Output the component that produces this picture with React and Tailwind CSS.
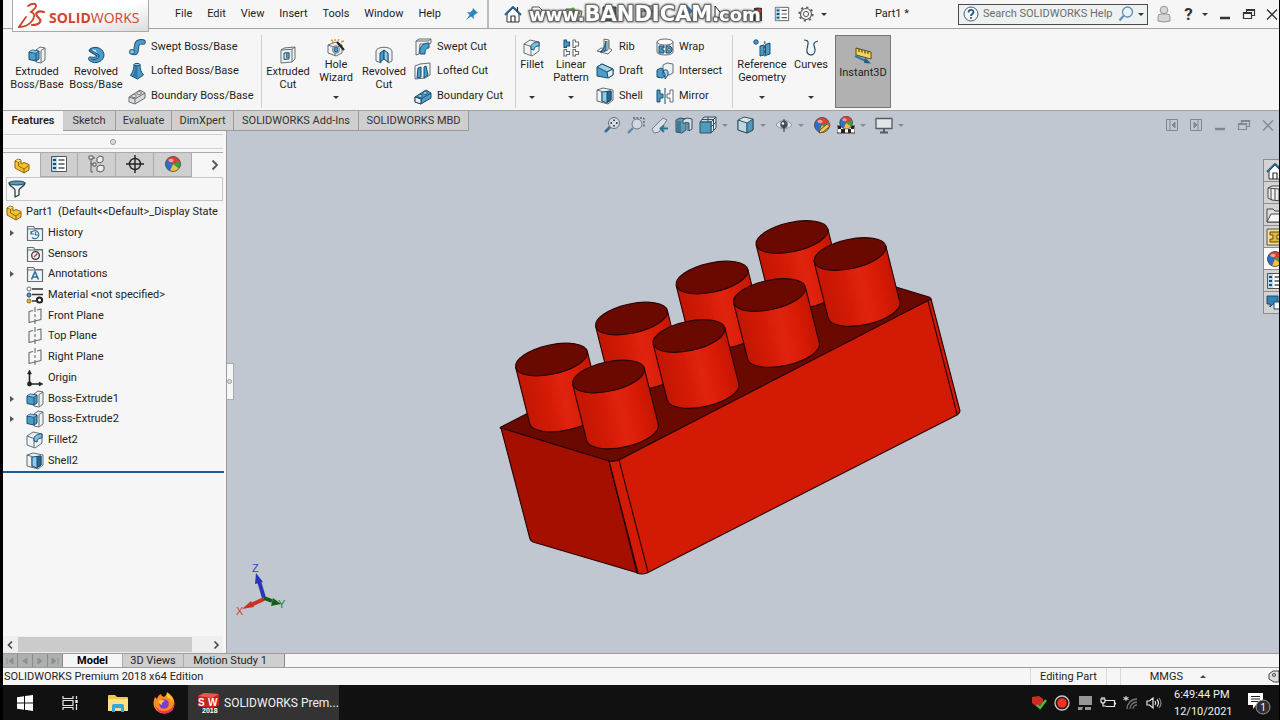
import React from 'react';

const B = '#4a9cc9';
const D = '#1d4d6e';
const G = '#666d73';
const L = '#eef3f6';

function Icon({ children, size = 'size-[18px]' }) {
  return (
    <svg viewBox="0 0 18 18" className={`${size} shrink-0`} fill="none" strokeLinejoin="round" aria-hidden="true">
      {children}
    </svg>
  );
}

const icons = {
  extrude: (
    <g strokeWidth="1">
      <path d="M8 4l4-3 5 1v12l-4 3-5-1z" fill={L} stroke={G} />
      <path d="M13 4.500v12M13 4.500l4-2.500" stroke={G} />
      <path d="M1 6l3-2 7 1v8l-3 2-7-1.500z" fill={B} stroke={D} />
      <path d="M1 6l7 1.200V15M8 7.200L11 5" stroke={D} />
      <path d="M1.500 5.800L4 4.300l6 1-2 1.500z" fill="#8dcbe8" />
    </g>
  ),
  revolve: (
    <g stroke={D}>
      <path d="M5 2c5-2 12 1 12 7s-8 10-14 6c-2-1-2-4 0-4s5 1 7-1L2 5c0-1 1-3 3-3z" fill={B} />
      <path d="M3 3.500l9 5.500M2 5l8 5M12 9c1 3-4 6-8 4" stroke={D} />
      <path d="M5 4l5 3-1-2.500L7 3.500z" fill="#d5eaf4" stroke="none" />
    </g>
  ),
  sweep: (
    <g>
      <path d="M4 14c5 2 4-2 4.500-5S9 3 15 4" stroke={D} strokeWidth="5.500" strokeLinecap="round" />
      <path d="M4 14c5 2 4-2 4.500-5S9 3 15 4" stroke={B} strokeWidth="3.800" strokeLinecap="round" />
      <ellipse cx="4" cy="13.800" rx="2.600" ry="2.300" fill="#80c3e4" stroke={D} strokeWidth=".8" />
    </g>
  ),
  loft: (
    <g stroke={D}>
      <path d="M6 2.500C6 8 4 11 2.500 13.500l7 3.500 6-4C13 10 12 7 12 2.500z" fill={B} />
      <path d="M9.500 4v12l-5-2.500C7 10 7 7 7 4z" fill="#2d79a8" stroke="none" />
      <ellipse cx="9" cy="2.600" rx="3" ry="1.200" fill="#9bd2ea" />
    </g>
  ),
  boundary: (
    <g stroke={G}>
      <path d="M1 10l11-7 5 3v5l-10 6-6-2z" fill="#dcdcdc" />
      <path d="M1 10l6 2 10-6M7 12v5" />
      <ellipse cx="6" cy="9" rx="2.300" ry="1.500" fill="#f4f4f4" />
      <ellipse cx="11" cy="6" rx="2.300" ry="1.500" fill="#f4f4f4" />
    </g>
  ),
  boundaryCut: (
    <g stroke={D}>
      <path d="M1 10l11-7 5 3v5l-10 6-6-2z" fill={B} />
      <path d="M1 10l6 2 10-6M7 12v5" />
      <path d="M1 10l6 2v5l-6-2z" fill="#e4eef3" />
      <ellipse cx="6" cy="9" rx="2.300" ry="1.400" fill="#bfe2f1" />
      <ellipse cx="11" cy="6" rx="2.300" ry="1.400" fill="#bfe2f1" />
    </g>
  ),
  cut: (
    <g stroke={G}>
      <path d="M2 4l3-2 11-1v12l-3 3-11 1z" fill={L} />
      <path d="M13 3.500V16M2 4l11-.7L16 1" />
      <path d="M5 7l5-.5v6.500l-5 .5z" fill="#bfe0ef" stroke={D} />
      <path d="M7.500 7v5l2.500-.5V6.800z" fill={B} />
    </g>
  ),
  wizard: (
    <g>
      <path d="M1 6l8-3 6 3v8l-6 3-8-3z" fill={L} stroke={G} />
      <path d="M1 6l7 2.500L15 6M8 8.500V17" stroke={G} />
      <ellipse cx="9" cy="10.500" rx="3.500" ry="3.800" fill="#fff" stroke={G} />
      <ellipse cx="9" cy="10.500" rx="2" ry="2.500" fill={B} stroke={D} />
      <path d="M10 3l7 8" stroke="#222" strokeWidth="2" />
      <path d="M4 1l2 1M8 0v2M12 0l-1 2M14 3l3-1M5 4l2-1" stroke="#d6973a" strokeWidth="1.400" />
    </g>
  ),
  revolveCut: (
    <g stroke={G}>
      <path d="M1 5c1-5 15-5 16 0v10l-4 2V8L9 5 6 8v9l-5-2z" fill={L} />
      <path d="M5 7l4-3v9l-4 3z" fill={B} stroke={D} />
      <path d="M9 4l4 3v9l-4-3z" fill="#8dcbe8" stroke={D} />
    </g>
  ),
  sweepCut: (
    <g stroke={G}>
      <path d="M2 3l3-2h12v4l-2 1H6l-1 10-3 1z" fill={L} />
      <path d="M6 16C5 9 8 5 15 5v5c-3 0-4 2-4 6z" fill={B} stroke={D} />
      <path d="M2 3h12l3-2" />
    </g>
  ),
  loftCut: (
    <g stroke={G}>
      <path d="M1 4l5-2 10-1v12l-5 3-10 1z" fill={L} />
      <path d="M4 6l3-1v10l-4 1zM10 5l2-1 2 9-4 3z" fill={B} stroke={D} />
    </g>
  ),
  fillet: (
    <g stroke={G}>
      <path d="M1 5l6-4 9 2v9l-7 5-8-3z" fill={L} />
      <path d="M1 5l7 2.500V17" />
      <path d="M8 7.500C8 5 12 2.500 16 3v4c-3 0-5 1-5 4l-3-1z" fill="#7cbfe0" stroke={D} />
    </g>
  ),
  pattern: (
    <g strokeWidth="1.100">
      <path d="M2 1h2.500v2h3v4h-3v1.500H2z" fill={B} stroke={D} />
      <path d="M11 1h2.500v2h3v4h-3v1.500H11zM2 10.500h2.500v2h3v3h-3V17H2zM11 10.500h2.500v2h3v3h-3V17H11z" fill="#fff" stroke={G} />
    </g>
  ),
  rib: (
    <g stroke={G}>
      <path d="M8 1l5 1v8l3 2-4 4-11-3 4-3 3 .5z" fill={L} />
      <path d="M10 3v9l-6 2c4-3 5-6 6-11z" fill={B} stroke={D} />
      <path d="M12 3v9l-7 3" />
    </g>
  ),
  draft: (
    <g stroke={D}>
      <path d="M1 5l5-3 11 5v6l-5 3-11-2z" fill={B} />
      <path d="M1 5l5-3 11 5-6 3z" fill="#9bd2ea" />
      <path d="M11 10l6-3v6l-5 3z" fill="#e4eef3" />
    </g>
  ),
  shell: (
    <g stroke={G}>
      <path d="M1 3l6-2 10 2v10l-5 4-11-3z" fill={L} />
      <path d="M1 3l5 1.500v11" />
      <path d="M6 5l9-1v9l-4 3-5-2z" fill="#8dcbe8" stroke={D} />
      <path d="M11 4.500l4-.5v9l-4 2.500z" fill="#28678f" stroke={D} />
    </g>
  ),
  wrap: (
    <g stroke={G}>
      <path d="M1 4v10c0 4 16 4 16 0V4z" fill={L} />
      <ellipse cx="9" cy="4" rx="8" ry="3" fill="#fff" />
      <path d="M3 8h5v2H6v2h2v3H3zM10 8h4l2 2v3l-2 2h-4z" fill={B} stroke={D} />
      <path d="M12 10.500h2v2h-2z" fill="#fff" />
    </g>
  ),
  intersect: (
    <g stroke={G}>
      <path d="M7 3l4-2 6 1v9l-4 2-6-2z" fill={L} />
      <path d="M1 8l4-2 2 1v6l2 1-3 2-5-1z" fill={B} stroke={D} />
      <path d="M7 9c3-2 5-1 5 1v3l-3 4V12z" fill="#9bd2ea" stroke={D} />
    </g>
  ),
  mirror: (
    <g>
      <path d="M1 3h3v4h3v4H4v4H1z" fill={B} stroke={D} />
      <path d="M17 3h-3v4h-3v4h3v4h3z" fill="#fff" stroke={G} />
      <path d="M9 1v16" stroke={D} />
    </g>
  ),
  geometry: (
    <g>
      <circle cx="3" cy="3" r="2.200" fill={B} stroke={D} />
      <path d="M7 7l4-1v10l-4 1zM12.500 5.500l4.500-1.500v11l-4.500 1.500z" fill={B} stroke={D} />
      <path d="M11.800 2v15.500" stroke={D} strokeDasharray="3 1.500" />
    </g>
  ),
  curves: <path d="M2 1c6 0 4 4 3 9-1 7 7 8 8 2 1-4-5-8 3-10" stroke={D} strokeWidth="1.200" />,
  instant: (
    <g>
      <path d="M2 1l15 4v7L2 8z" fill="#f5d45c" stroke="#5b4a12" />
      <path d="M5 2v3M8 3v2.500M11 4v2.500M14 4.500V7" stroke="#2f2708" />
      <path d="M1 9l11 5" stroke="#2d79a8" strokeWidth="2" />
      <path d="M11 10.500l6 6-7-.5z" fill="#1f5d85" />
    </g>
  ),
  home: (
    <g>
      <path d="M3 9v8h12V9L9 3z" fill="#fff" stroke="#333" />
      <path d="M1 10l8-8 8 8" stroke="#2a6184" strokeWidth="2" />
      <path d="M7 17v-6h4v6M13.500 2v4" stroke="#333" strokeWidth="1.200" />
    </g>
  ),
  list: (
    <g>
      <path d="M1.500 1.500h15v15h-15z" fill="#fff" stroke="#555" />
      <path d="M2 2h5v14H2z" fill="#b9dcec" />
      <path d="M3 5h3M3 9h3M3 13h3" stroke={D} strokeWidth="2" />
      <path d="M8.500 5h6M8.500 9h6M8.500 13h6" stroke="#555" strokeWidth="1.300" />
    </g>
  ),
  part: (
    <g stroke="#8a6410">
      <path d="M2 5l3-2 3 1v4l3-1.500 5 2V14l-5 3-9-5z" fill="#f4c22f" />
      <path d="M8 4L5.500 6v4L11 13l5-3.500M11 13v4M2 5l3.500 1" />
      <path d="M5 3.500L8 4.300 5.500 6 3 5z" fill="#ffe58a" stroke="none" />
    </g>
  ),
  config: (
    <g stroke="#555">
      <path d="M3 1v16H5M3 3h4M3 9h4" />
      <path d="M1 1h4v3H1zM9 3l3-2 3 1v4l-3 2-3-1zM9 12l3-2 4 1v4l-3 2-4-1zM5 8h3v3H5z" fill="#eee" />
    </g>
  ),
  target: (
    <g stroke="#222" strokeWidth="1.400">
      <circle cx="9" cy="9" r="5.500" />
      <path d="M9 0v18M0 9h18" />
    </g>
  ),
  ball: (
    <g>
      <circle cx="9" cy="9" r="7.500" fill="#2f6fc6" />
      <path d="M9 9L3 4.500A7.500 7.500 0 0 1 16 6z" fill="#e2402f" />
      <path d="M9 9L3 4.500A7.500 7.500 0 0 0 6 16z" fill="#2f6fc6" />
      <path d="M9 9l-3 7a7.500 7.500 0 0 0 9-2.500z" fill="#f0c236" />
      <path d="M9 9l6 4.500A7.500 7.500 0 0 0 16 6z" fill="#3fa043" />
      <circle cx="9" cy="9" r="7.500" stroke="#4b4b4b" strokeWidth=".8" />
      <ellipse cx="7" cy="5.500" rx="2.500" ry="1.800" fill="#fff" opacity=".5" />
    </g>
  ),
  funnel: (
    <g stroke="#2b3f4b">
      <path d="M1 3c0 3 6 5 6 7v7l4-2v-5c0-2 6-4 6-7z" fill="#eef5f8" strokeWidth="1.300" />
      <ellipse cx="9" cy="3" rx="8" ry="2" fill={B} />
    </g>
  ),
  folder: (
    <g stroke={G}>
      <path d="M1.500 16.500V2.500h6l1.500 2h7.500v12z" fill="#f2f4f5" strokeWidth="1.200" />
      <path d="M1.500 5h15" />
    </g>
  ),
  material: (
    <g>
      <circle cx="3" cy="3" r="2" fill="#fff" stroke={G} />
      <circle cx="3" cy="9" r="2" fill={B} stroke={D} />
      <circle cx="3" cy="15" r="2" fill="#f4c22f" stroke="#8a6410" />
      <path d="M6 3h11M6 8.500h11M6 15h4" stroke="#333" strokeWidth="1.400" />
      <circle cx="13.500" cy="14" r="2.600" stroke="#222" strokeWidth="2" fill="#fff" />
    </g>
  ),
  plane: (
    <g stroke={G} strokeWidth="1.100">
      <path d="M7 3.500L3 4.500v11l12-3v-10.500l-4 1" />
      <path d="M9 0v5M9 7v3M9 12v5" />
    </g>
  ),
  origin: (
    <g stroke="#222" strokeWidth="1.600">
      <path d="M3.500 3v12H15" />
      <path d="M1.500 5l2-4 2 4zM13 13l4 2-4 2z" fill="#222" strokeWidth=".5" />
      <circle cx="3.500" cy="15" r="1.600" fill="#222" />
    </g>
  ),
  zoomFit: (
    <g stroke="#66717a">
      <circle cx="11" cy="7" r="5.500" fill="#d4dbe3" />
      <path d="M7 11l-5 5" stroke="#3b6c8e" strokeWidth="2.600" />
      <path d="M11 3.500v1.500M11 9v1.500M7.500 7H9M13 7h1.500" stroke="#3c444b" strokeWidth="1.800" />
    </g>
  ),
  zoomArea: (
    <g stroke="#6d7882">
      <path d="M6 2h11v10" strokeDasharray="2 1.500" stroke="#333" />
      <circle cx="10" cy="8" r="5" fill="#cdd9e4" />
      <path d="M6 12l-5 5" stroke="#5c88a6" strokeWidth="2.400" />
    </g>
  ),
  prevView: (
    <g stroke="#747e87">
      <path d="M1 13L12 2l4 2-8 12-5 1z" fill="#d9dfe4" />
      <path d="M17 12.500H10M13 9.500l-3.500 3 3.500 3.500" stroke="#2b7299" strokeWidth="2" />
    </g>
  ),
  section: (
    <g stroke="#34505f">
      <path d="M1 4l4-2 6 1v11l-4 3-6-1z" fill="#5b9dbd" />
      <path d="M8 4l4-2 5 1v10l-3 2V7l-3-.5-3 1z" fill="#d4dde2" />
      <path d="M3 5v11M5 5v11M13 7v8" />
    </g>
  ),
  viewCube: (
    <g stroke="#34505f">
      <path d="M12 6l5-5v11l-5 5z" fill="#dfe7eb" />
      <path d="M1 6l4-5h12l-5 5z" fill="#cfdde4" />
      <path d="M1 6h11v11H1z" fill="#4d9bbd" />
      <path d="M9 1v5M3 3.500h12M12 11l5-5M14.500 3.500v11" />
    </g>
  ),
  cube: (
    <g stroke="#34505f">
      <path d="M1 4l6-3 9 2v11l-6 3-9-3z" fill="#dbe5ea" />
      <path d="M1 4l9 3v10l-9-3z" fill="#bcd6e2" />
      <path d="M10 7l6-4v11l-6 3z" fill="#4d9bbd" />
    </g>
  ),
  eye: (
    <g>
      <path d="M1 9c4-6 12-6 16 0-4 5-12 5-16 0z" fill="#dfe3e7" stroke="#8a929a" />
      <circle cx="9" cy="8.500" r="3.800" fill="#4f565d" />
      <path d="M9 3v13" stroke="#333" />
      <circle cx="8" cy="7.500" r="1.200" fill="#fff" />
    </g>
  ),
  monitor: (
    <g stroke="#555b60">
      <path d="M1 2.500h16v10H1z" fill="#e2e6e6" strokeWidth="1.300" />
      <path d="M9 12.500V16M5 16.500h8" strokeWidth="2" />
    </g>
  ),
  books: (
    <g stroke="#444">
      <path d="M2 4l4-2 11 0v12l-3 3-8-1-4-2z" fill="#eee" />
      <path d="M5 5v11M9 5v11M13 5v12M2 4l11 1 4-3" />
    </g>
  ),
  open: (
    <g stroke="#444">
      <path d="M1 16V3h6l2 2h8v11z" fill="#ddd" />
      <path d="M1 16l4-8h13v8z" fill="#f7f7f7" />
    </g>
  ),
  palette: (
    <g>
      <path d="M1 1h16v16H1z" fill="#f2dd90" stroke="#555" />
      <path d="M4 4h10v3h-3v4h3v3H4v-3h3V7H4z" fill="#e5b63a" stroke="#5f4a12" />
    </g>
  ),
  chat: (
    <g>
      <path d="M1 2h11v8H7l-3 3v-3H1z" fill="#3583b0" stroke={D} />
      <path d="M8 8h10v7h-3v2l-2-2H8z" fill="#f2f7fa" stroke={D} />
    </g>
  ),
};

icons.paint = (
  <g>
    {icons.ball}
    <path d="M7 14l7-6 3 2-7 6-4 1z" fill="#f3c964" stroke="#6b4a1c" />
    <path d="M14 8l1-1 3 2-1 1z" fill="#c95b45" />
  </g>
);
icons.scene = (
  <g>
    <path d="M0 10h18v7H0z" fill="#fff" stroke="#333" />
    <path d="M1 10h3v3H1zM14 10h3v3h-3zM4 13h4v4H4zM11 13h3v4h-3z" fill="#222" />
    <g transform="translate(1.500 -1) scale(.85)">{icons.ball}</g>
  </g>
);

function Caret({ color = 'border-t-[#333]' }) {
  return <span className={`block h-0 w-0 border-x-[3px] border-t-[3px] border-x-transparent ${color}`} />;
}

function BigTool({ icon, lines, width, arrow }) {
  return (
    <button className={`flex h-full shrink-0 flex-col items-center ${width} ${arrow ? 'pt-1' : 'pt-[11px]'}`}>
      <Icon>{icons[icon]}</Icon>
      <span className="mt-[1px] block h-6 text-center leading-[13px] whitespace-nowrap">
        {lines.map((l) => (
          <span key={l} className="block">{l}</span>
        ))}
      </span>
      {arrow && <span className="mt-[14px]"><Caret /></span>}
    </button>
  );
}

function ToolColumn({ items, width }) {
  return (
    <div className={`grid h-full shrink-0 grid-rows-3 ${width}`}>
      {items.map(([icon, label]) => (
        <button key={label} className="flex items-center gap-[5px] whitespace-nowrap">
          <Icon>{icons[icon]}</Icon>
          {label}
        </button>
      ))}
    </div>
  );
}

const Divider = () => <div className="h-full w-px shrink-0 bg-[#cfcfcf]" />;

function Logo() {
  return (
    <div className="ml-[9px] flex h-8 w-[137px] shrink-0 items-center self-start border border-t-0 border-[#a9a9a9] bg-linear-to-br from-white via-white to-[#dcdcdc] pl-[5px] text-[#d0442f]">
      <svg viewBox="0 0 28 27" className="h-[27px] w-7 shrink-0" fill="none" stroke="currentColor" strokeLinecap="round" aria-hidden="true">
        <path d="M10 4c4-3 8-3 8 0 0 2-3 4-5 6 4 1 4 5 1 9-3 4-7 6-13 6l7-10" strokeWidth="1.800" />
        <path d="M26 10c-6-2-9 1-7 4 1 2 5 3 3 6-1 2-4 3-8 3" strokeWidth="2.200" />
      </svg>
      <span className="mt-1 ml-[3px] font-['Open_Sans','Noto_Sans',sans-serif] text-[14px] leading-4"><b>SOLID</b>WORKS</span>
    </div>
  );
}

function WindowGlyph({ kind }) {
  return (
    <svg viewBox="0 0 14 14" className="size-[14px] shrink-0" fill="none" stroke="currentColor" aria-hidden="true">
      {kind === 'min' && <path d="M2 11h10" strokeWidth="2.500" />}
      {kind === 'restore' && <path d="M4.500 5V2.500h8v6H10M1.500 5.500h8v6h-8zM4.500 3.500h8M1.500 6.500h8" strokeWidth="1.200" />}
      {kind === 'close' && <path d="M2 2.500l10 10M12 2.500l-10 10" strokeWidth="1.300" />}
      {kind === 'left' && <path d="M1.500 1.500h11v11h-11zM5 1.500v11" />}
      {kind === 'left' && <path d="M7 7l3-3v6z" fill="currentColor" />}
      {kind === 'right' && <path d="M1.500 1.500h11v11h-11zM9 1.500v11" />}
      {kind === 'right' && <path d="M8 7l-3-3v6z" fill="currentColor" />}
    </svg>
  );
}

function Watermark() {
  return (
    <div className="relative ml-[7px] flex h-7 w-[236px] shrink-0 items-center">
      <svg viewBox="0 0 236 28" className="absolute inset-0 h-7 w-[236px]" fill="none" aria-hidden="true">
        <path d="M3 7h7l3 3v11H3z" fill="#fff" stroke="#555" />
        <path d="M37 9h6l2 2h8l-2 10H37z" fill="#c7d9a8" stroke="#555" />
        <path d="M41 11l3-4 5 5 3 1-6 3z" fill="#4ea52f" />
        <path d="M74 7h13v14H74z" fill="#3a6f8c" stroke="#333" />
        <path d="M112 11h15v8h-15zM115 6h9v5h-9z" fill="#b8c6cc" stroke="#444" />
        <path d="M150 17q-1-8 8-8V5l6 6-6 6v-4q-4 0-4 5z" fill="#2f7fae" />
        <path d="M186 6v15l4-4 5 0z" fill="#fff" stroke="#222" />
        <path d="M225 8q4-1 8 0v13h-8z" fill="#333" />
        <circle cx="230" cy="11" r="2.500" fill="#c83a30" />
      </svg>
      <div className="relative flex items-baseline font-['DejaVu_Sans',sans-serif] font-bold text-white [paint-order:stroke_fill] [-webkit-text-stroke:2px_#6a6a6a] drop-shadow-[0_0_1px_#333]">
        <span className="text-[18px] leading-6">www.</span>
        <span className="text-[21px] leading-6">BANDICAM</span>
        <span className="text-[18px] leading-6">.com</span>
      </div>
    </div>
  );
}

function TitleBar() {
  return (
    <header className="flex h-[29px] items-center border-b border-[#a3a3a3]">
      <Logo />
      <nav className="ml-[26px] flex w-[266px] shrink-0 justify-between">
        {['File', 'Edit', 'View', 'Insert', 'Tools', 'Window', 'Help'].map((m) => (
          <button key={m}>{m}</button>
        ))}
      </nav>
      <button aria-label="Pin menu" className="ml-6">
        <svg viewBox="0 0 14 14" className="size-[14px]" aria-hidden="true">
          <path d="M8 1l5 5-2 .500-2.500 2.500.500 3-3-2.500L1 13l3.500-5L2 5l3 .500L7.500 3z" fill="#2f86b8" />
        </svg>
      </button>
      <div className="ml-2 h-full w-[2px] bg-[#bdbdbd]" />
      <button aria-label="Home" className="ml-[15px]"><Icon>{icons.home}</Icon></button>
      <Watermark />
      <button aria-label="File properties" className="ml-[9px]"><Icon size="size-4">{icons.list}</Icon></button>
      <button aria-label="Options" className="ml-2">
        <svg viewBox="0 0 16 16" className="size-4" fill="none" stroke="#5a5a5a" aria-hidden="true">
          <circle cx="8" cy="8" r="5.500" strokeWidth="1.200" />
          <circle cx="8" cy="8" r="2.600" />
          <circle cx="8" cy="8" r="6.800" strokeWidth="1.600" strokeDasharray="2.200 3.140" />
        </svg>
      </button>
      <span className="ml-[7px]"><Caret /></span>
      <span className="ml-auto pr-[49px] whitespace-nowrap">Part1 *</span>
      <label className="flex h-[21px] w-[190px] shrink-0 items-center border border-[#4a4a4a] bg-[#eef1f2] pr-[3px] pl-1">
        <svg viewBox="0 0 16 16" className="size-4 shrink-0" aria-hidden="true">
          <circle cx="8" cy="8" r="7" fill="#f4f8fa" stroke="#47606f" />
          <path d="M5.500 6.500C5.500 3 10.500 3.200 10.500 6c0 2-2.500 2-2.500 4M8 11v1.800" fill="none" stroke="#1f5d85" strokeWidth="1.800" />
        </svg>
        <input aria-label="Search SOLIDWORKS Help" placeholder="Search SOLIDWORKS Help" className="ml-1 w-0 min-w-0 flex-1 bg-transparent outline-none placeholder:text-[#6c6c6c]" />
        <svg viewBox="0 0 16 16" className="mr-1 size-4 shrink-0" fill="none" aria-hidden="true">
          <circle cx="9.500" cy="6" r="5" fill="#eaf3fb" stroke="#5f8fb8" strokeWidth="1.300" />
          <path d="M5.500 10L1.500 14.500" stroke="#5f8fb8" strokeWidth="2.200" />
        </svg>
        <Caret />
      </label>
      <div className="ml-2 flex shrink-0 items-center text-[#333]">
        <button aria-label="Account">
          <svg viewBox="0 0 16 18" className="h-[18px] w-4" fill="#d6d6d6" stroke="#949494" aria-hidden="true">
            <path d="M2 16V12q0-3 3-3h6q3 0 3 3v4q-6 2-12 0z" />
            <circle cx="8" cy="5" r="3.800" />
          </svg>
        </button>
        <button aria-label="Help" className="ml-3 w-[9px] text-[17px] leading-4 font-bold">?</button>
        <span className="ml-[9px]"><Caret /></span>
        <button aria-label="Minimize" className="ml-[10px]"><WindowGlyph kind="min" /></button>
        <button aria-label="Restore" className="ml-[10px]"><WindowGlyph kind="restore" /></button>
        <button aria-label="Close" className="ml-[9px] w-[14px] overflow-hidden"><WindowGlyph kind="close" /></button>
      </div>
    </header>
  );
}

function Ribbon() {
  return (
    <div className="flex h-[82px] border-b border-[#a3a3a3] pt-[6px] pb-[2px] pl-[5px]">
      <BigTool icon="extrude" lines={['Extruded', 'Boss/Base']} width="w-[58px]" />
      <BigTool icon="revolve" lines={['Revolved', 'Boss/Base']} width="w-[60px]" />
      <ToolColumn width="w-[133px] pl-[2px]" items={[['sweep', 'Swept Boss/Base'], ['loft', 'Lofted Boss/Base'], ['boundary', 'Boundary Boss/Base']]} />
      <div className="w-[2px]" />
      <Divider />
      <div className="w-[2px]" />
      <BigTool icon="cut" lines={['Extruded', 'Cut']} width="w-12" />
      <BigTool icon="wizard" lines={['Hole', 'Wizard']} width="w-12" arrow />
      <BigTool icon="revolveCut" lines={['Revolved', 'Cut']} width="w-12" />
      <ToolColumn width="w-[107px] pl-[6px]" items={[['sweepCut', 'Swept Cut'], ['loftCut', 'Lofted Cut'], ['boundaryCut', 'Boundary Cut']]} />
      <Divider />
      <BigTool icon="fillet" lines={['Fillet']} width="w-8" arrow />
      <BigTool icon="pattern" lines={['Linear', 'Pattern']} width="w-[46px]" arrow />
      <ToolColumn width="w-[60px] pl-[2px]" items={[['rib', 'Rib'], ['draft', 'Draft'], ['shell', 'Shell']]} />
      <ToolColumn width="w-[78px] pl-[2px]" items={[['wrap', 'Wrap'], ['intersect', 'Intersect'], ['mirror', 'Mirror']]} />
      <Divider />
      <BigTool icon="geometry" lines={['Reference', 'Geometry']} width="w-[58px]" arrow />
      <BigTool icon="curves" lines={['Curves']} width="w-10" arrow />
      <div className="w-1" />
      <BigTool icon="instant" lines={['Instant3D']} width="w-14 border border-[#777] bg-[#b1b1b1]" />
    </div>
  );
}

const hud = [
  ['zoomFit', 'Zoom to fit'], ['zoomArea', 'Zoom to area'], ['prevView', 'Previous view'], ['section', 'Section view'],
  ['viewCube', 'View orientation', true], ['cube', 'Display style', true], ['eye', 'Hide items', true],
  ['paint', 'Edit appearance'], ['scene', 'Apply scene', true], ['monitor', 'View settings', true],
];

function CommandTabs() {
  const tabs = [
    ['Features', 'w-[60px]'], ['Sketch', 'w-[53px]'], ['Evaluate', 'w-14'],
    ['DimXpert', 'w-[62px]'], ['SOLIDWORKS Add-Ins', 'w-[125px]'], ['SOLIDWORKS MBD', 'w-[110px]'],
  ];
  return (
    <div className="flex h-5 items-start">
      {tabs.map(([t, w], i) => (
        <button
          key={t}
          className={`h-5 shrink-0 text-center whitespace-nowrap ${w} ${i === 0 ? 'bg-[#f6f6f6] font-semibold' : 'border-r border-b border-[#9a9a9a] bg-[#cfcfcf] text-[#333]'}`}
        >
          {t}
        </button>
      ))}
      <div className="ml-[134px] flex h-7 shrink-0 items-center gap-[6px]">
        {hud.map(([icon, label, arrow]) => (
          <button key={label} aria-label={label} className={`flex items-center gap-[5px] ${arrow ? 'pr-[3px]' : ''}`}>
            <Icon>{icons[icon]}</Icon>
            {arrow && <Caret color="border-t-[#848c96]" />}
          </button>
        ))}
      </div>
      <div className="ml-auto flex h-7 shrink-0 items-center gap-[10px] pr-[4px] text-[#80878f]">
        {['left', 'right', 'min', 'restore', 'close'].map((k) => (
          <button key={k} aria-label={`Document ${k}`}><WindowGlyph kind={k} /></button>
        ))}
      </div>
    </div>
  );
}

function FolderGlyph({ mark }) {
  return (
    <Icon>
      {icons.folder}
      {mark === 'clock' && <path d="M5 9.500a4 4 0 1 1 1 4M5 7v3h3M9.500 8v3h2.500" stroke="#2b7299" strokeWidth="1.200" />}
      {mark === 'gauge' && <g><circle cx="9.500" cy="10.500" r="3.800" stroke="#333" strokeWidth="1.300" /><path d="M8 12l3.500-3.500" stroke="#d33" strokeWidth="1.500" /></g>}
      {mark === 'letter' && <path d="M5.500 14.500l3.500-8 3.500 8M7 12h4" stroke="#2b7299" strokeWidth="1.600" />}
    </Icon>
  );
}

const tree = [
  ['clock', 'History', true], ['gauge', 'Sensors'], ['letter', 'Annotations', true], ['material', 'Material <not specified>'],
  ['plane', 'Front Plane'], ['plane', 'Top Plane'], ['plane', 'Right Plane'], ['origin', 'Origin'],
  ['extrude', 'Boss-Extrude1', true], ['extrude', 'Boss-Extrude2', true], ['fillet', 'Fillet2'], ['shell', 'Shell2'],
];

function FeatureManager() {
  return (
    <aside className="flex w-[224px] shrink-0 flex-col border-r border-[#9c9c9c] bg-[#f6f6f6] pt-[3px]">
      <div className="mr-[3px] flex h-[15px] items-center justify-center border-y border-[#d2d2d2]">
        <span className="size-[6px] rounded-full border border-[#999] bg-[#ddd]" />
      </div>
      <div className="mt-[3px] mr-[3px] flex h-6 items-center border-t border-[#aaa]">
        {['part', 'list', 'config', 'target', 'ball'].map((k, i) => (
          <button
            key={k}
            aria-label={`Panel ${k}`}
            className={`flex h-6 items-center justify-center ${i === 0 ? 'w-[37px] bg-[#f6f6f6]' : 'w-[38px] border-r border-b border-l border-[#aaa] bg-[#cfcfcf]'} ${i > 1 ? 'border-l-0' : ''}`}
          >
            <Icon>{icons[k]}</Icon>
          </button>
        ))}
        <button aria-label="More panels" className="mr-1 ml-auto">
          <svg viewBox="0 0 8 12" className="h-3 w-2" fill="none" stroke="#555" strokeWidth="1.800" aria-hidden="true"><path d="M1.500 1.500L6 6l-4.500 4.500" /></svg>
        </button>
      </div>
      <label className="mt-[1px] mr-[3px] ml-[3px] flex h-6 items-center border border-[#c6c6c6] pl-[1px]">
        <Icon>{icons.funnel}</Icon>
        <input aria-label="Filter tree" className="w-0 flex-1 bg-transparent outline-none" />
      </label>
      <ul className="mt-px mr-[2px] grid h-[269px] auto-rows-fr overflow-hidden text-[#222]">
        <li className="flex items-center gap-[3px] pl-[2px] whitespace-nowrap">
          <Icon>{icons.part}</Icon>
          <span className="whitespace-pre">{'Part1  (Default<<Default>_Display State'}</span>
        </li>
        {tree.map(([icon, label, open]) => (
          <li key={label} className="flex items-center whitespace-nowrap">
            <span className="flex w-[23px] pl-[7px]">
              {open && <span className="h-0 w-0 border-y-[3px] border-l-[4px] border-y-transparent border-l-[#555]" />}
            </span>
            {icons[icon] ? <Icon>{icons[icon]}</Icon> : <FolderGlyph mark={icon} />}
            <span className="ml-1">{label}</span>
          </li>
        ))}
      </ul>
      <div className="mr-[2px] h-[2px] bg-[#1d5c96]" />
      <div className="mt-auto mr-[3px] flex h-[17px] items-center bg-[#efefef] px-[3px]">
        <svg viewBox="0 0 8 10" className="h-[10px] w-2" fill="none" stroke="#444" strokeWidth="1.600" aria-hidden="true"><path d="M6 1.500L2.500 5 6 8.500" /></svg>
        <div className="mr-5 ml-1 h-[15px] flex-1 bg-[#cbcbcb]" />
        <svg viewBox="0 0 8 10" className="h-[10px] w-2" fill="none" stroke="#444" strokeWidth="1.600" aria-hidden="true"><path d="M2.500 1.500L6 5 2.500 8.500" /></svg>
      </div>
    </aside>
  );
}

const studs = [
  [792, 237], [712, 277.5], [631.5, 318.5], [551.5, 359.5],
  [850, 254], [769.500, 295], [689, 336], [608.500, 376.500],
];

function Brick() {
  return (
    <svg viewBox="227 131 1052 522" preserveAspectRatio="xMidYMid slice" className="absolute inset-0 h-full w-full" strokeLinejoin="round" role="img" aria-label="Brick model">
      <defs>
        <linearGradient id="stud" x1="0" x2="1" y1="0.2" y2="0">
          <stop offset="0" stopColor="#c21603" />
          <stop offset="0.300" stopColor="#d51b05" />
          <stop offset="0.480" stopColor="#e02410" />
          <stop offset="0.700" stopColor="#d61a04" />
          <stop offset="1" stopColor="#b01202" />
        </linearGradient>
      </defs>
      <g stroke="#250300" strokeWidth="1.100">
        <path d="M501 427L812 267Q817 263 823 265L929 297Q933 299 929 301L619 460Q614 462 609 461L502 429Q499 428 501 427z" fill="#6a0900" />
        <path d="M501 428L609 461L638 573L533 542Q531 541 530 539z" fill="#a50f00" />
        <path d="M609 461Q614 462 619 460L931 299L960 411Q960 413 957 415L647 573Q642 575 637 573z" fill="#d31a04" />
        <path d="M609 461L638 573M619 460L648 572M928 301L957 414" fill="none" />
      </g>
      {studs.map(([x, y]) => (
        <g key={`${x}-${y}`} transform={`translate(${x} ${y})`} stroke="#250300" strokeWidth="1.100">
          <path d="M-35.800 8.200l14 56A36.700 14.600 -12.500 0 0 49.800 47.800l-14-56z" fill="url(#stud)" />
          <ellipse rx="36.700" ry="14.600" transform="rotate(-12.500)" fill="#6a0900" />
        </g>
      ))}
    </svg>
  );
}

function Triad() {
  return (
    <svg viewBox="0 0 52 56" className="absolute bottom-[36px] left-[8px] h-14 w-[52px]" aria-label="Orientation triad" role="img">
      <path d="M29 37L24 20" stroke="#2a35b5" strokeWidth="4" />
      <path d="M21 12l7 9-8 2z" fill="#2a35b5" />
      <path d="M29 38l-13 6" stroke="#c93325" strokeWidth="4" />
      <path d="M7 48l9-8 3 6z" fill="#c93325" />
      <path d="M29 37l8 3" stroke="#155c1b" strokeWidth="4" />
      <path d="M46 43l-10 2 2-8z" fill="#155c1b" />
      <g fontFamily="Liberation Sans, sans-serif" fontSize="11">
        <text x="17" y="11" fill="#3640cc">Z</text>
        <text x="1" y="54" fill="#d53c30">X</text>
        <text x="43" y="47" fill="#228a2c">Y</text>
      </g>
    </svg>
  );
}

function Viewport() {
  return (
    <main className="relative min-w-0 flex-1">
      <Brick />
      <button aria-label="Collapse panel" className="absolute top-[232px] left-0 flex h-[37px] w-[7px] items-center border-y border-r border-[#aaa] bg-[#f6f6f6]">
        <span className="size-[5px] rounded-full border border-[#999] bg-[#ddd]" />
      </button>
      <Triad />
      <div className="absolute top-7 right-0 w-4 overflow-hidden border-t border-l border-[#8c8c8c]">
        {['home', 'books', 'open', 'palette', 'ball', 'list', 'chat'].map((k) => (
          <button key={k} aria-label={`Task pane ${k}`} className={`flex h-[22px] w-4 items-center overflow-hidden border-b border-[#8c8c8c] pl-[2px] ${k === 'ball' ? 'bg-white' : 'bg-[#d3d3d3]'}`}>
            <Icon>{icons[k]}</Icon>
          </button>
        ))}
      </div>
    </main>
  );
}

function BottomTabs() {
  return (
    <div className="flex h-[15px] items-stretch border-y border-[#9c9c9c] bg-[#f6f6f6]">
      {['M3 2v6M9 2L5 5l4 3z', 'M8 2L4 5l4 3z', 'M4 2l4 3-4 3z', 'M9 2v6M3 2l4 3-4 3z'].map((d) => (
        <button key={d} aria-label="Scroll tabs" className="flex w-[15px] items-center justify-center border-r border-[#8b8b8b] bg-[#adb0b0]">
          <svg viewBox="0 0 12 10" className="h-[10px] w-3" fill="#8b8f8f" stroke="#8b8f8f" aria-hidden="true"><path d={d} /></svg>
        </button>
      ))}
      <button className="w-[60px] border-r border-[#aaa] leading-3 font-bold text-black">Model</button>
      <button className="w-[61px] border-r border-[#aaa] bg-[#cfcfcf] leading-3 whitespace-nowrap">3D Views</button>
      <button className="w-[101px] border-r border-[#8b8b8b] bg-[#cfcfcf] pr-2 leading-3 whitespace-nowrap">Motion Study 1</button>
    </div>
  );
}

function StatusBar() {
  return (
    <footer className="flex h-[17px] items-center pl-[1px] whitespace-nowrap">
      <span>SOLIDWORKS Premium 2018 x64 Edition</span>
      <div className="ml-auto flex h-full items-center">
        <span className="flex h-full items-center border-x border-[#d8d8d8] px-[9px]">Editing Part</span>
        <span className="ml-[13px] flex h-full items-center border-l border-[#d8d8d8] pl-[29px]">MMGS</span>
        <span className="ml-[17px] h-0 w-0 border-x-[3px] border-b-[3px] border-x-transparent border-b-[#444]" />
        <svg viewBox="0 0 11 14" className="ml-[62px] h-[14px] w-[11px]" fill="#ddd" stroke="#444" aria-hidden="true">
          <path d="M1 4l4-3h6v11H6L1 9z" />
          <circle cx="6" cy="5" r="1.500" />
        </svg>
      </div>
    </footer>
  );
}

function Taskbar() {
  return (
    <div className="flex h-[35px] shrink-0 items-center bg-[#111111] text-[#f2f2f2]">
      <button aria-label="Start" className="ml-[14px]">
        <svg viewBox="0 0 16 16" className="size-4" fill="#fff" aria-hidden="true"><path d="M0 2.200L7 1.200v6.300H0zM8 1l8-1v7.500H8zM0 8.500h7v6.300l-7-1zM8 8.500h8V16l-8-1.200z" /></svg>
      </button>
      <button aria-label="Task view" className="ml-[29px]">
        <svg viewBox="0 0 17 16" className="h-4 w-[17px]" fill="none" stroke="#e8e8e8" strokeWidth="1.200" aria-hidden="true">
          <path d="M1 1v2.500h10V1M1 15v-2.500h10V15M1 5.500h10v5H1zM14.500 1v3M14.500 9v6" />
          <path d="M14.500 5v3" strokeWidth="2.500" />
        </svg>
      </button>
      <button aria-label="File Explorer" className="ml-[28px]">
        <svg viewBox="0 0 22 20" className="h-5 w-[22px]" aria-hidden="true">
          <path d="M1 3q0-1 1-1h6l2 2h10q1 0 1 1v13H1z" fill="#f2c84b" />
          <path d="M1 6h20v12H1z" fill="#fbe08a" />
          <path d="M5 19v-6q0-2 2-2h8q2 0 2 2v6h-3v-4H8v4z" fill="#3aa5d8" />
        </svg>
      </button>
      <button aria-label="Firefox" className="ml-6">
        <svg viewBox="0 0 22 22" className="size-[22px]" aria-hidden="true">
          <path d="M2 5q1 1 2 2 1-4 4-5 0 2 3 3Q14 3 14 0q7 4 7.500 11A10.300 10.300 0 0 1 11 21.500 10.300 10.300 0 0 1 .5 11Q.5 8 2 5z" fill="#ff8a1e" />
          <path d="M2 13q3 6 9 6 8 0 10-8 1 10-10 10.500Q4 21 2 13z" fill="#f0335c" />
          <circle cx="11" cy="12" r="4.800" fill="#7b3fd0" />
          <path d="M5 9q4-2 7 0-4 1-3 4-3-1-4-4z" fill="#ffc93a" />
          <path d="M14 1q6 4 6 10-2-5-5-5-2-2-1-5z" fill="#ffd23c" />
        </svg>
      </button>
      <button className="ml-[13px] flex h-full w-[151px] items-center gap-1 bg-[#333333] pl-[9px] text-[12px] whitespace-nowrap">
        <svg viewBox="0 0 23 22" className="h-[22px] w-[23px] shrink-0" aria-hidden="true">
          <path d="M1 4l6-3 15 1v11l-7 4-14-3z" fill="#c8221d" />
          <path d="M1 4l6-3 15 1-7 4z" fill="#e45a50" />
          <g fontFamily="Liberation Sans, sans-serif" fontWeight="bold" fill="#fff">
            <text x="1" y="14" fontSize="10">S</text>
            <text x="11" y="14" fontSize="10">W</text>
            <text x="5" y="21" fontSize="7">2018</text>
          </g>
        </svg>
        SOLIDWORKS Prem...
      </button>
      <div className="ml-auto flex items-center gap-[7px]">
        <svg viewBox="0 0 16 16" className="size-4" aria-label="SOLIDWORKS monitor" role="img">
          <path d="M1 2l7-1 4 3v5l-6 3-5-4z" fill="#cf2a25" />
          <path d="M6 10l3 3 6-8" fill="none" stroke="#3fbf3b" strokeWidth="2.400" />
        </svg>
        <svg viewBox="0 0 16 16" className="size-4" aria-label="Recording" role="img">
          <circle cx="8" cy="8" r="7" fill="#2a1513" stroke="#c9c9c9" strokeWidth="1.300" />
          <circle cx="8" cy="8" r="4.800" fill="#ee3226" />
        </svg>
        <svg viewBox="0 0 16 16" className="size-4" aria-label="Display" role="img">
          <path d="M2 1h13v9H2zM1 12h5l-1 3H1zM8 12h6v3H8z" fill="#969696" />
        </svg>
        <svg viewBox="0 0 16 16" className="size-4" fill="none" stroke="#e8e8e8" strokeWidth="1.200" aria-label="Battery" role="img">
          <path d="M5 5.500h9.500v6H6M15.500 7.500v2M1 4h4v3q-2 2-4 0zM2 2v2M4 2v2M3 8v3h3" />
        </svg>
        <svg viewBox="0 0 16 16" className="size-4" fill="none" stroke="#777" strokeWidth="1.300" aria-label="Wireless" role="img">
          <path d="M4 14A10 10 0 0 1 14 4M7 14a7 7 0 0 1 7-7M10 14a4 4 0 0 1 4-4" />
          <path d="M3 1v5M.5 2.500l5 2M5.500 2.500l-5 2" stroke="#eee" strokeWidth="1" />
        </svg>
        <svg viewBox="0 0 16 16" className="size-4" fill="none" stroke="#e8e8e8" strokeWidth="1.200" aria-label="Volume" role="img">
          <path d="M1 6h2.500L7 3v10L3.500 10H1zM9 6q1.500 2 0 4M11 4.500q3 3.500 0 7" />
          <path d="M13 3q4 5 0 10" stroke="#888" />
        </svg>
      </div>
      <div className="ml-3 w-[55px] text-right leading-[17px] whitespace-nowrap">
        <div>6:49:44 PM</div>
        <div>12/10/2021</div>
      </div>
      <button aria-label="Notifications" className="mr-[8px] ml-[18px]">
        <svg viewBox="0 0 24 24" className="size-6" aria-hidden="true">
          <path d="M1 2h15v12H9l-3 4v-4H1z" fill="#fff" />
          <path d="M4 5.500h9M4 8h9M4 10.500h9" stroke="#222" />
          <circle cx="16" cy="16" r="7" fill="#2f2f2f" stroke="#9a9a9a" />
          <text x="13" y="20" fill="#fff" fontSize="11" fontFamily="Open Sans, sans-serif">1</text>
        </svg>
      </button>
    </div>
  );
}

export default function App() {
  return (
    <div className="flex min-h-screen flex-col overflow-hidden bg-black pr-px pl-[3px] font-['Roboto','Noto_Sans',sans-serif] text-[11px] leading-4 text-[#1e1e1e]">
      <div className="flex flex-1 flex-col bg-[#f6f6f6]">
        <TitleBar />
        <Ribbon />
        <div className="flex flex-1 flex-col bg-[#c1c7d1]">
          <CommandTabs />
          <div className="flex flex-1">
            <FeatureManager />
            <Viewport />
          </div>
        </div>
        <BottomTabs />
        <StatusBar />
      </div>
      <Taskbar />
    </div>
  );
}
